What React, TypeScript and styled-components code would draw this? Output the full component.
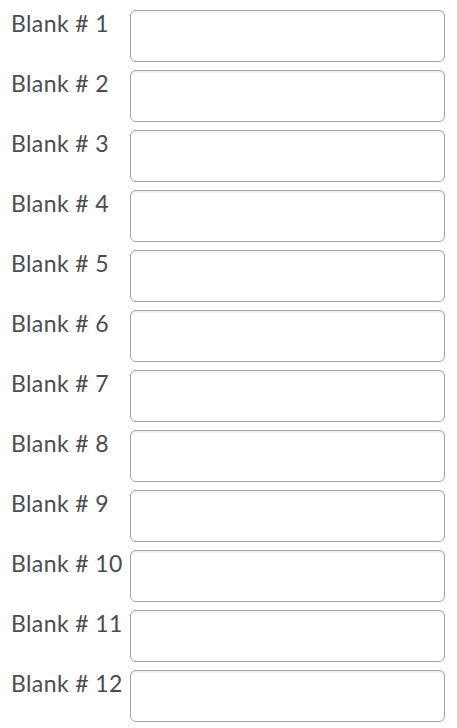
import styled, { createGlobalStyle } from 'styled-components';

const GlobalStyle = createGlobalStyle`
  body {
    margin: 0;
    background: #ffffff;
    font-family: Lato, 'Liberation Sans', sans-serif;
  }
`;

const blanks = Array.from({ length: 12 }, (_, i) => i + 1);

const App = () => {
  return (
    <>
      <GlobalStyle />
      <List>
        {blanks.map((n) => (
          <Row key={n}>
            <Label htmlFor={`blank-${n}`}>Blank # {n}</Label>
            <Input id={`blank-${n}`} type="text" />
          </Row>
        ))}
      </List>
    </>
  );
};

export default App;

const List = styled.div`
  display: flex;
  flex-direction: column;
  gap: 8px;
  padding: 10px 12px 0 10px;
`;

const Row = styled.div`
  display: grid;
  grid-template-columns: 120px 1fr;
  align-items: start;
`;

const Label = styled.label`
  padding-left: 1px;
  font-family: Lato, 'Liberation Sans', sans-serif;
  font-size: 23px;
  line-height: 27px;
  letter-spacing: 0.4px;
  color: #494c4e;
  white-space: nowrap;
`;

const Input = styled.input`
  box-sizing: border-box;
  width: 100%;
  height: 52px;
  margin: 0;
  border: 1px solid #9ea3a6;
  border-radius: 6px;
  background: #ffffff;
  box-shadow: inset 0 2px 0 0 rgba(185, 194, 208, 0.2);
  outline: none;
`;
